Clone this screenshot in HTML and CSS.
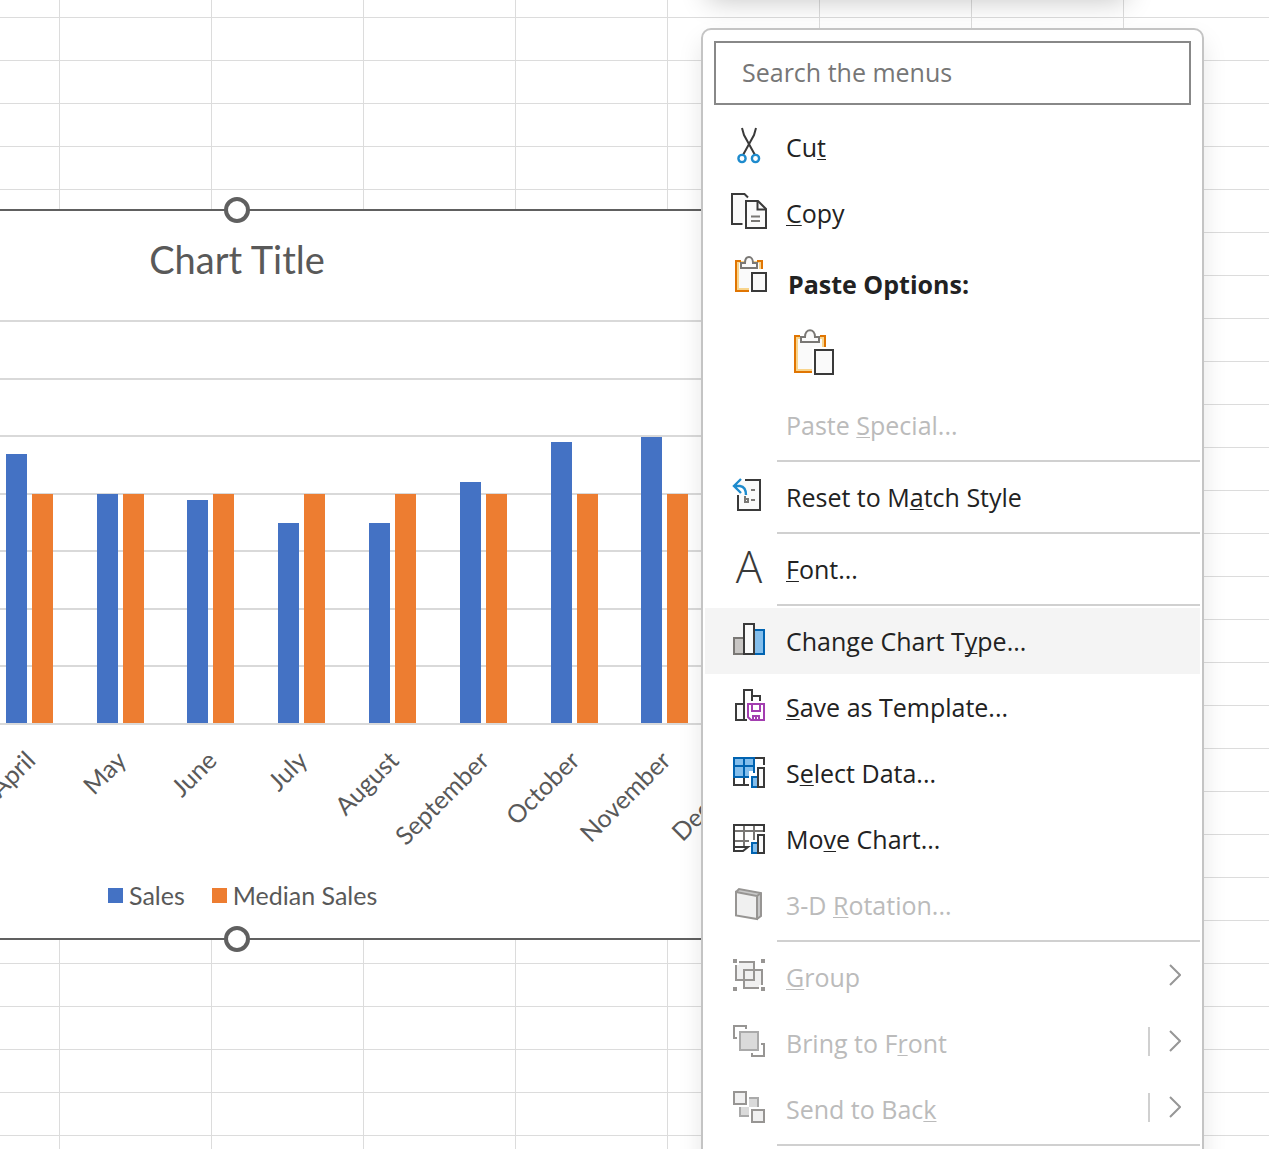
FILE: index.html
```html
<!DOCTYPE html>
<html lang="en">
<head>
<meta charset="utf-8">
<title>Chart context menu</title>
<link rel="stylesheet" href="styles.css">
</head>
<body>
<main class="sheet">
  <section class="chart" aria-label="Chart">
    <span class="handle handle-top"></span>
    <span class="handle handle-bottom"></span>
    <h1 class="chart-title">Chart Title</h1>
    <div class="plot">
      <div class="gridlines"><i></i><i></i><i></i><i></i><i></i><i></i><i></i><i></i></div>
      <div class="bars">
        <div class="month"><b class="bar sales" style="--v:47"></b><b class="bar median" style="--v:40"></b></div>
        <div class="month"><b class="bar sales" style="--v:40"></b><b class="bar median" style="--v:40"></b></div>
        <div class="month"><b class="bar sales" style="--v:39"></b><b class="bar median" style="--v:40"></b></div>
        <div class="month"><b class="bar sales" style="--v:35"></b><b class="bar median" style="--v:40"></b></div>
        <div class="month"><b class="bar sales" style="--v:35"></b><b class="bar median" style="--v:40"></b></div>
        <div class="month"><b class="bar sales" style="--v:42"></b><b class="bar median" style="--v:40"></b></div>
        <div class="month"><b class="bar sales" style="--v:49"></b><b class="bar median" style="--v:40"></b></div>
        <div class="month"><b class="bar sales" style="--v:50"></b><b class="bar median" style="--v:40"></b></div>
        <div class="month"></div>
      </div>
    </div>
    <div class="labels">
      <div class="tick"><span>April</span></div>
      <div class="tick"><span>May</span></div>
      <div class="tick"><span>June</span></div>
      <div class="tick"><span>July</span></div>
      <div class="tick"><span>August</span></div>
      <div class="tick"><span>September</span></div>
      <div class="tick"><span>October</span></div>
      <div class="tick"><span>November</span></div>
      <div class="tick"><span>December</span></div>
    </div>
    <div class="legend">
      <span class="key"><i class="swatch sales"></i>Sales</span>
      <span class="key"><i class="swatch median"></i>Median Sales</span>
    </div>
  </section>

  <div class="mini-toolbar"></div>

  <div class="menu" role="menu">
    <input class="search" type="text" placeholder="Search the menus" aria-label="Search the menus">

    <button class="item" role="menuitem">
      <svg class="icon" viewBox="0 0 36 36" fill="none"><path d="M11 1L13 8L24 28M25 1L23 8L12 28" stroke="#3a3a3a" stroke-width="2"/><circle cx="11" cy="31.500" r="3.600" stroke="#1e8bcd" stroke-width="2.400"/><circle cx="24.500" cy="31.500" r="3.600" stroke="#1e8bcd" stroke-width="2.400"/></svg>
      <span>Cu<u>t</u></span>
    </button>
    <button class="item" role="menuitem">
      <svg class="icon" viewBox="0 0 36 36" fill="none" stroke="#3a3a3a" stroke-width="2"><path d="M11.500 31H1V1H13.500L17 4.500" fill="#fafafa"/><path d="M15 8H27L35 16V35H15Z" fill="#fafafa"/><path d="M26.500 8V16.500H35"/><path d="M20 23.500H29M20 28H29" stroke="#797774"/></svg>
      <span><u>C</u>opy</span>
    </button>

    <div class="item heading">
      <svg class="icon" viewBox="0 0 36 36" fill="none" stroke-width="2"><path d="M7 6H29V13H19V33H7Z" fill="#fafafa"/><path d="M18 33H7V6H29V13" stroke="#f8d48c"/><path d="M10 5H5V35H18M26 5H31V13" stroke="#e07502"/><path d="M10 12V7H14C14 -1 22 -1 22 7H26V12Z" fill="#fafafa" stroke="#797774"/><path d="M21 17H35V35H21Z" fill="#fafafa" stroke="#3a3a3a"/></svg>
      <span>Paste Options:</span>
    </div>
    <div class="gallery">
      <button class="paste" aria-label="Paste">
        <svg class="icon-large" viewBox="0 0 40 46" fill="none" stroke-width="2"><path d="M3 9H29V18H18V41H3Z" fill="#fafafa"/><path d="M18 41H3V9H29V18" stroke="#f8d48c"/><path d="M6 7H1V43H18M26 7H31V18" stroke="#e07502"/><path d="M7 13V8H11C11 -1 21 -1 21 8H25V13Z" fill="#fafafa" stroke="#797774"/><path d="M21 21H39V45H21Z" fill="#fafafa" stroke="#3a3a3a"/></svg>
      </button>
    </div>
    <button class="item" role="menuitem" disabled>
      <span class="icon"></span>
      <span>Paste <u>S</u>pecial...</span>
    </button>
    <hr class="rule">
    <button class="item" role="menuitem">
      <svg class="icon" viewBox="0 0 36 36" fill="none" stroke-width="2"><path d="M8 4H29V32H8Z" fill="#fafafa"/><path d="M14 3H29V33H7V18" stroke="#3a3a3a"/><path d="M20 13H24M20 23H24M14 19V25H17V22H14" stroke="#797774"/><path d="M3 9H9Q17 9.500 17 18L10 16" fill="#fff"/><path d="M10 2L3 9L10 16M3 9H9Q15 10 15 18" stroke="#1e8bcd" stroke-width="2.400"/></svg>
      <span>Reset to M<u>a</u>tch Style</span>
    </button>
    <hr class="rule">
    <button class="item" role="menuitem">
      <svg class="icon" viewBox="0 0 36 36"><text class="letter" x="18" y="34" text-anchor="middle">A</text></svg>
      <span><u>F</u>ont...</span>
    </button>
    <hr class="rule">
    <button class="item active" role="menuitem">
      <svg class="icon" viewBox="0 0 36 36" stroke-width="2"><path d="M3 17H13V33H3Z" fill="#c8c6c4" stroke="#797774"/><path d="M23 9H33V33H23Z" fill="#83beec" stroke="#0063b1"/><path d="M13 3H23V33H13Z" fill="#fafafa" stroke="#3a3a3a"/></svg>
      <span>Change Chart T<u>y</u>pe...</span>
    </button>
    <button class="item" role="menuitem">
      <svg class="icon" viewBox="0 0 36 36" fill="none" stroke-width="2"><path d="M5 17H13V33H5Z" fill="#fafafa" stroke="#3a3a3a"/><path d="M13 33V3H21V14M21 9H29V14M13 33H16" stroke="#3a3a3a"/><path d="M17 17H33V33H20L17 30Z" fill="#fff" stroke="#a33eb0"/><path d="M21 17V24H29V17M22 33V29H28V33M25 30V33" stroke="#a33eb0"/></svg>
      <span><u>S</u>ave as Template...</span>
    </button>
    <button class="item" role="menuitem">
      <svg class="icon" viewBox="0 0 36 36" fill="none" stroke-width="2"><path d="M24 5H33V12M3 24V32H18M13 24V32" stroke="#3a3a3a"/><path d="M3 5H23V18H18V24H3Z" fill="#83beec"/><path d="M23 20V5H3V24H18M13 5V24M3 13H23" stroke="#0063b1"/><path d="M21 24H27V34H21Z" fill="#83beec" stroke="#0063b1"/><path d="M27 15H33V34H27Z" fill="#fafafa" stroke="#3a3a3a"/></svg>
      <span>S<u>e</u>lect Data...</span>
    </button>
    <button class="item" role="menuitem">
      <svg class="icon" viewBox="0 0 36 36" fill="none" stroke-width="2"><path d="M3 12H33M3 22H18M13 5V27M23 5V21" stroke="#797774"/><path d="M33 13V6H3V32H12L17 28H3" stroke="#3a3a3a"/><path d="M21 24H27V34H21Z" fill="#83beec" stroke="#0063b1"/><path d="M27 16H33V34H27Z" fill="#fafafa" stroke="#3a3a3a"/></svg>
      <span>Mo<u>v</u>e Chart...</span>
    </button>
    <button class="item" role="menuitem" disabled>
      <svg class="icon" viewBox="0 0 36 36" stroke="#979593" stroke-width="2"><path d="M5 7L8 4L30 8V31L26 34" fill="#c8c8c8"/><path d="M5 7L26 11V34L5 30.500Z" fill="#f0f0f0"/><path d="M26 11L30 8"/></svg>
      <span>3-D <u>R</u>otation...</span>
    </button>
    <hr class="rule">
    <button class="item" role="menuitem" disabled>
      <svg class="icon" viewBox="0 0 36 36" fill="none" stroke="#979593" stroke-width="2"><path d="M5 8H8V5H23V23H5ZM23 13H31V28H28V31H13V23" fill="#f0f0f0" stroke="none"/><path d="M8 5H23V23H5V8M31 28V13H13V31H28"/><path d="M2 2H6V6H2ZM30 2H34V6H30ZM2 30H6V34H2ZM30 30H34V34H30Z" fill="#979593" stroke="none"/></svg>
      <span><u>G</u>roup</span>
      <svg class="chevron" viewBox="0 0 12 22"><path d="M1 1L11 11L1 21"/></svg>
    </button>
    <button class="item" role="menuitem" disabled>
      <svg class="icon" viewBox="0 0 36 36" fill="none" stroke="#979593" stroke-width="2"><path d="M15 6V3H3V15H6M33 20V33H21V30M30 21H33"/><path d="M9 9H27V27H9Z" fill="#dadada" stroke="#aaa"/></svg>
      <span>Bring to F<u>r</u>ont</span>
      <span class="split"></span>
      <svg class="chevron" viewBox="0 0 12 22"><path d="M1 1L11 11L1 21"/></svg>
    </button>
    <button class="item" role="menuitem" disabled>
      <svg class="icon" viewBox="0 0 36 36" stroke="#979593" stroke-width="2"><path d="M18 9H27V18H18ZM9 18H18V27H9Z" fill="#dadada" stroke="none"/><path d="M18 9H27V18M9 18V27H18" fill="none" stroke="#aaa"/><path d="M3 3H15V15H3ZM21 21H33V33H21Z" fill="#f0f0f0"/></svg>
      <span>Send to Bac<u>k</u></span>
      <span class="split"></span>
      <svg class="chevron" viewBox="0 0 12 22"><path d="M1 1L11 11L1 21"/></svg>
    </button>
    <hr class="rule">
  </div>
</main>
</body>
</html>
```
FILE: styles.css
```css
* {
  box-sizing: border-box;
}

body {
  margin: 0;
  font-family: "Open Sans", "Noto Sans", sans-serif;
  color: #222;
}

/* Worksheet cells */
.sheet {
  position: relative;
  height: 100vh;
  overflow: hidden;
  background-color: #fff;
  background-image:
    linear-gradient(to right, #dcdcdc 1px, transparent 1px),
    linear-gradient(to bottom, #dcdcdc 1px, transparent 1px);
  background-size: 152px 43px;
  background-position: 59px 17px;
}

/* Chart object floating over the cells */
.chart {
  position: absolute;
  top: 209px;
  left: 0;
  width: 720px;
  padding: 24px 0 27px;
  border: solid #606060;
  border-width: 2px 0;
  background: #fff;
  color: #595959;
  font-family: Lato, Carlito, sans-serif;
}

.handle {
  position: absolute;
  left: 224px;
  width: 26px;
  height: 26px;
  border: 4px solid #606060;
  border-radius: 50%;
  background: #fff;
}

.handle-top {
  top: -14px;
}

.handle-bottom {
  bottom: -14px;
}

.chart-title {
  width: 474px;
  margin: 0 0 37px;
  font-size: 38px;
  font-weight: 400;
  line-height: 48px;
  text-align: center;
}

.plot {
  display: grid;
  height: 405px;
}

.gridlines,
.bars {
  grid-area: 1 / 1;
}

.gridlines {
  display: flex;
  flex-direction: column;
  justify-content: space-between;
}

.gridlines i {
  height: 2px;
  background: #d9d9d9;
}

.bars,
.labels {
  display: flex;
  width: 817px;
  margin-left: -16px;
}

.bars {
  padding: 2px 0;
}

.month {
  display: flex;
  flex: 1;
  align-items: flex-end;
  justify-content: center;
  gap: 5px;
}

.bar {
  width: 21px;
  height: calc(var(--v) / 70 * 100%);
}

.sales {
  background: #4472c4;
}

.median {
  background: #ed7d31;
}

.labels {
  height: 154px;
  padding-top: 15px;
}

.tick {
  display: flex;
  flex: 1 1 0;
  justify-content: flex-end;
  min-width: 0;
  padding-right: 45px;
  font-size: 25px;
  line-height: 30px;
}

.tick span {
  height: 30px;
  transform: rotate(-45deg);
  transform-origin: 100% 50%;
}

.legend {
  display: flex;
  gap: 27px;
  padding-left: 108px;
  font-size: 25px;
  line-height: 32px;
}

.key {
  display: flex;
  align-items: center;
  gap: 6px;
}

.swatch {
  width: 15px;
  height: 15px;
}

/* Lower edge of the floating toolbar above the menu */
.mini-toolbar {
  position: absolute;
  top: -60px;
  left: 708px;
  width: 418px;
  height: 60px;
  box-shadow: 0 0 28px rgba(0, 0, 0, 0.24);
}

/* Context menu */
.menu {
  position: absolute;
  top: 28px;
  left: 701px;
  width: 503px;
  padding: 11px 2px 80px;
  border: 2px solid #c4c4c4;
  border-radius: 10px;
  background: #fff;
  box-shadow: 0 12px 24px rgba(0, 0, 0, 0.1);
}

.search {
  display: block;
  width: 477px;
  height: 64px;
  margin: 0 9px 9px;
  padding: 0 26px 2px;
  border: 2px solid #888;
  border-radius: 0;
  background: #fff;
  font: 25px "Open Sans", "Noto Sans", sans-serif;
}

.search::placeholder {
  color: #767676;
  opacity: 1;
}

.item {
  display: flex;
  align-items: center;
  width: 100%;
  height: 66px;
  padding: 0 19px 0 26px;
  border: 0;
  background: none;
  color: #222;
  font: 25px/34px "Open Sans", "Noto Sans", sans-serif;
  text-align: left;
  white-space: nowrap;
}

.item:disabled {
  color: #bbb;
}

.item u {
  text-decoration-thickness: 1px;
  text-underline-offset: 2px;
  text-decoration-skip-ink: none;
}

.active {
  background: #f4f4f4;
}

.icon {
  flex: none;
  width: 36px;
  height: 36px;
  margin: 0 19px 4px 0;
  overflow: visible;
}

.letter {
  fill: #3a3a3a;
  font: 300 44px "Open Sans", "Noto Sans", sans-serif;
}

.heading {
  height: 60px;
  font-weight: 700;
}

.heading span {
  padding: 16px 0 0 2px;
}

.gallery {
  display: flex;
  height: 86px;
  padding: 23px 0 0 89px;
}

.paste {
  height: 46px;
  padding: 0;
  border: 0;
  background: none;
}

.icon-large {
  display: block;
  width: 40px;
  height: 46px;
}

.rule {
  height: 2px;
  margin: 2px 0 2px 72px;
  border: 0;
  background: #d0d0d0;
}

.chevron {
  width: 12px;
  height: 22px;
  margin: 0 0 5px auto;
  fill: none;
  stroke: #979797;
  stroke-width: 2;
}

.split {
  width: 2px;
  height: 29px;
  margin: 0 0 3px auto;
  background: #d0d0d0;
}

.split + .chevron {
  margin-left: 19px;
}
```
